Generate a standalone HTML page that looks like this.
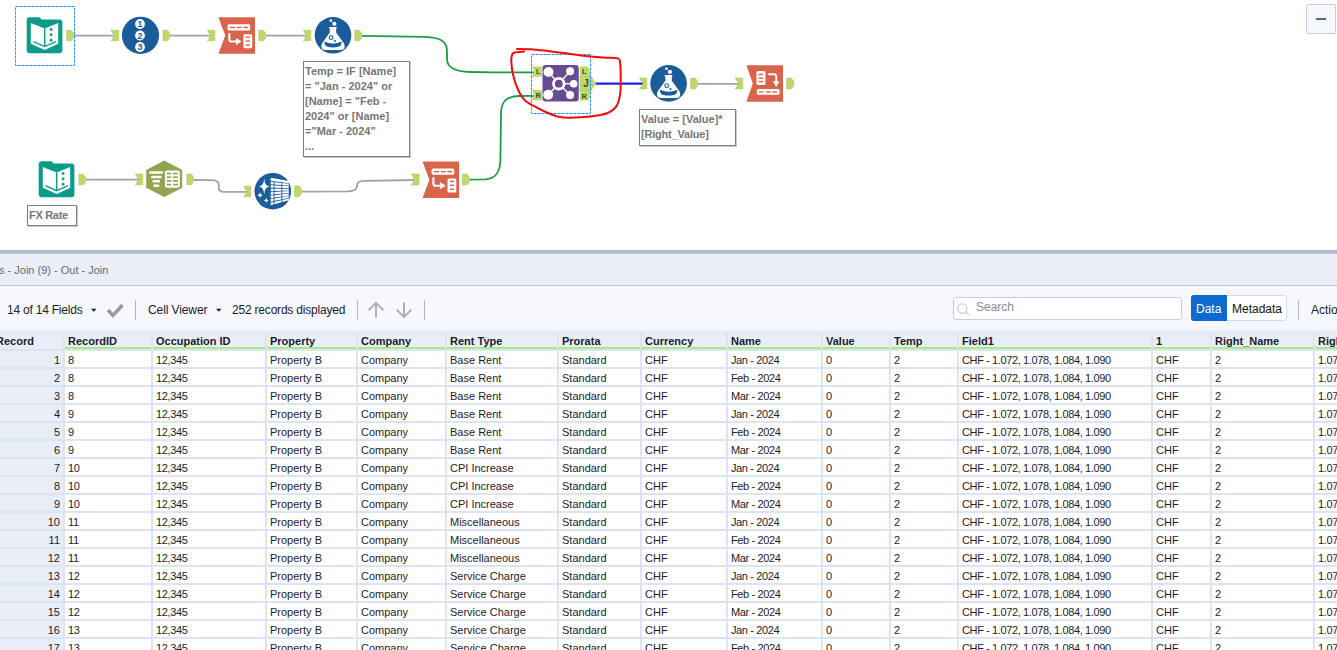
<!DOCTYPE html>
<html><head><meta charset="utf-8">
<style>
html,body{margin:0;padding:0;}
body{width:1337px;height:650px;position:relative;overflow:hidden;background:#fff;font-family:"Liberation Sans",sans-serif;}
.abs{position:absolute;}
.cm{position:absolute;background:#fff;border:1px solid #808080;box-shadow:1px 1px 0 #c8c8c8;color:#767676;font-weight:700;font-size:11px;}
.cm span{position:absolute;white-space:pre;left:1px;}
.hc{position:absolute;background:#e9edf7;overflow:hidden;}
.ht{position:absolute;left:3px;top:2px;font-size:11px;font-weight:700;color:#1c1c2a;white-space:pre;line-height:13px;}
.gl{position:absolute;top:347px;height:2px;background:#9ef07f;}
.rc{position:absolute;left:0;width:63px;height:16px;background:#e9edf7;}
.rn{position:absolute;right:3px;top:3px;font-size:11px;color:#1c1c2a;line-height:13px;}
.c{position:absolute;height:16px;background:#fff;overflow:hidden;}
.dt{position:absolute;left:3px;top:3px;font-size:11px;color:#1c1c2a;white-space:pre;line-height:13px;}
.n{letter-spacing:-0.38px;}
.tb{position:absolute;font-size:12px;color:#1c1c2a;white-space:pre;line-height:14px;}
</style></head><body>
<svg width="1337" height="250" viewBox="0 0 1337 250" style="position:absolute;left:0;top:0">
<g fill="none" stroke-width="1.8">
<path d="M74,35.6 L114.5,35.6" stroke="#a2a2a2"/>
<path d="M170,35.6 L210.8,35.6" stroke="#a2a2a2"/>
<path d="M266,35.6 L306.7,35.6" stroke="#a2a2a2"/>
<path d="M361.5,35.8 L425,36.8 C440,37.5 446.5,41 446.9,50 L447.1,60 C447.5,68 455,71.5 470,72 L494,72.3 L534,72.3" stroke="#1f9a48"/>
<path d="M595.4,83.6 L643,83.6" stroke="#2222e6" stroke-width="2.2"/>
<path d="M698,83.8 L738.7,83.8" stroke="#a2a2a2"/>
<path d="M86,179.6 L138.9,179.6" stroke="#a2a2a2"/>
<path d="M194,180 L212,180.2 C217,180.4 218.8,182 218.8,185 L218.8,188 C218.8,190.5 220.5,191.8 224,191.9 L247.1,191.9" stroke="#a2a2a2"/>
<path d="M302,191.6 L348,191.4 C353,191.2 356.5,190 356.8,187 L357.2,184.5 C357.6,182 359.5,181 364,180.8 L414.8,180" stroke="#a2a2a2"/>
<path d="M470,179.6 L485,179.4 C496,179 500,172 500.4,160 L501,112 C501.5,101 507,96.5 518,96 L534,95.9" stroke="#1f9a48"/>
</g>
<path d="M26.7,20.2 Q26.7,17.2 29.7,17.2 L38.7,17.2 Q40.7,17.2 41.2,19.5 L59.400000000000006,19.5 Q62.400000000000006,19.5 62.400000000000006,22.5 L62.400000000000006,50.2 Q62.400000000000006,53.2 59.400000000000006,53.2 L29.7,53.2 Q26.7,53.2 26.7,50.2 Z" fill="#0b9b8b"/><path d="M30.80,23.00 L44.70,28.50 L58.20,23.00 L58.20,43.70 L44.70,49.90 L30.80,43.70 Z" fill="#fff"/><path d="M44.70,28.50 L44.70,46.60 M33.40,41.60 L44.70,46.60 L56.00,41.60" stroke="#0b9b8b" stroke-width="1.4" fill="none"/><circle cx="51.10" cy="29.50" r="1.45" fill="#0b9b8b"/><circle cx="51.10" cy="34.80" r="1.45" fill="#0b9b8b"/><circle cx="51.10" cy="40.20" r="1.45" fill="#0b9b8b"/>
<path d="M66.7,30.2 L71.2,30.2 Q74.0,32.85 74.0,35.5 Q74.0,38.15 71.2,40.8 L66.7,40.8 Z" fill="#bcd96a" stroke="#a9ca5c" stroke-width="0.6"/>
<path d="M111,30.2 L118.8,30.2 L118.8,40.8 L111,40.8 L114.5,35.5 Z" fill="#bcd96a" stroke="#a9ca5c" stroke-width="0.6"/>
<circle cx="140.5" cy="35.3" r="18.6" fill="#1b5c9b"/><circle cx="140.0" cy="23.999999999999996" r="4.9" fill="#fff"/><text x="140.0" y="27.099999999999998" font-family="Liberation Sans" font-size="9" font-weight="700" fill="#1b5c9b" text-anchor="middle">1</text><circle cx="140.0" cy="35.5" r="4.9" fill="#fff"/><text x="140.0" y="38.6" font-family="Liberation Sans" font-size="9" font-weight="700" fill="#1b5c9b" text-anchor="middle">2</text><circle cx="140.0" cy="47.0" r="4.9" fill="#fff"/><text x="140.0" y="50.1" font-family="Liberation Sans" font-size="9" font-weight="700" fill="#1b5c9b" text-anchor="middle">3</text>
<path d="M163,30.2 L167.5,30.2 Q170.3,32.85 170.3,35.5 Q170.3,38.15 167.5,40.8 L163,40.8 Z" fill="#bcd96a" stroke="#a9ca5c" stroke-width="0.6"/>
<path d="M207.3,30.2 L214.8,30.2 L214.8,40.8 L207.3,40.8 L210.8,35.5 Z" fill="#bcd96a" stroke="#a9ca5c" stroke-width="0.6"/>
<path d="M218.40,17.30 L255.00,17.30 L255.00,53.80 L218.40,53.80 L225.30,35.50 Z" fill="#d8644c"/><rect x="227.50" y="24.30" width="22.7" height="6.3" rx="1.5" fill="#fff"/><line x1="229.90" y1="27.45" x2="234.90" y2="27.45" stroke="#d8644c" stroke-width="1.4"/><line x1="236.70" y1="27.45" x2="241.60" y2="27.45" stroke="#d8644c" stroke-width="1.4"/><line x1="243.20" y1="27.45" x2="248.00" y2="27.45" stroke="#d8644c" stroke-width="1.4"/><rect x="243.40" y="34.30" width="8.8" height="13.9" rx="1.5" fill="#fff"/><line x1="245.60" y1="37.20" x2="250.00" y2="37.20" stroke="#d8644c" stroke-width="1.4"/><line x1="245.60" y1="41.10" x2="250.00" y2="41.10" stroke="#d8644c" stroke-width="1.4"/><line x1="245.60" y1="45.00" x2="250.00" y2="45.00" stroke="#d8644c" stroke-width="1.4"/><path d="M229.30,33.00 L229.30,39.20 Q229.30,41.50 231.60,41.50 L237.00,41.50" stroke="#fff" stroke-width="2.1" fill="none"/><path d="M236.00,37.90 L241.60,41.50 L236.00,45.10 Z" fill="#fff"/>
<path d="M258.8,30.2 L263.3,30.2 Q266.1,32.85 266.1,35.5 Q266.1,38.15 263.3,40.8 L258.8,40.8 Z" fill="#bcd96a" stroke="#a9ca5c" stroke-width="0.6"/>
<path d="M303.2,30.2 L310.9,30.2 L310.9,40.8 L303.2,40.8 L306.7,35.5 Z" fill="#bcd96a" stroke="#a9ca5c" stroke-width="0.6"/>
<circle cx="333" cy="35.3" r="18.3" fill="#1b5c9b"/><path d="M328.60,27.00 L337.00,27.00 L336.20,28.80 L336.20,32.60 L344.00,43.50 Q346.50,49.80 340.50,50.00 L325.50,50.00 Q319.50,49.80 322.00,43.50 L329.80,32.60 L329.80,28.80 Z" fill="#fff"/><path d="M324.50,41.60 Q333.00,45.80 341.60,41.60 Q342.00,45.20 339.00,46.60 Q333.00,48.40 327.00,46.60 Q324.00,45.20 324.50,41.60 Z" fill="#1b5c9b"/><circle cx="331.10" cy="37.60" r="1.9" fill="none" stroke="#1b5c9b" stroke-width="1.1"/><circle cx="334.90" cy="41.00" r="1" fill="#1b5c9b"/><circle cx="330.90" cy="20.60" r="1.35" fill="#fff"/><circle cx="334.30" cy="23.80" r="2.1" fill="#fff"/>
<path d="M354.8,30.2 L359.3,30.2 Q362.1,32.85 362.1,35.5 Q362.1,38.15 359.3,40.8 L354.8,40.8 Z" fill="#bcd96a" stroke="#a9ca5c" stroke-width="0.6"/>
<rect x="542.5" y="65.1" width="36.3" height="36.3" rx="3.2" fill="#694b91"/><line x1="558.8" y1="83.7" x2="548.5" y2="72" stroke="#fff" stroke-width="1.4"/><circle cx="548.5" cy="72" r="5" fill="#fff"/><line x1="558.8" y1="83.7" x2="570.1" y2="71.3" stroke="#fff" stroke-width="1.4"/><circle cx="570.1" cy="71.3" r="4" fill="#fff"/><line x1="558.8" y1="83.7" x2="573.7" y2="83.7" stroke="#fff" stroke-width="1.4"/><circle cx="573.7" cy="83.7" r="3.8" fill="#fff"/><line x1="558.8" y1="83.7" x2="548.2" y2="94.7" stroke="#fff" stroke-width="1.4"/><circle cx="548.2" cy="94.7" r="5" fill="#fff"/><line x1="558.8" y1="83.7" x2="570.1" y2="95" stroke="#fff" stroke-width="1.4"/><circle cx="570.1" cy="95" r="4" fill="#fff"/><circle cx="558.8" cy="83.7" r="5.3" fill="#694b91" stroke="#fff" stroke-width="2.8"/><path d="M531.9,66.5 L541.8,66.5 L541.8,76.7 L531.9,76.7 L534.6,71.6 Z" fill="#bcd96a"/><text x="538.2" y="74.3" font-family="Liberation Sans" font-size="7.5" font-weight="700" fill="#35503a" text-anchor="middle">L</text><path d="M531.9,90.1 L541.8,90.1 L541.8,100.3 L531.9,100.3 L534.6,95.19999999999999 Z" fill="#bcd96a"/><text x="538.2" y="97.89999999999999" font-family="Liberation Sans" font-size="7.5" font-weight="700" fill="#35503a" text-anchor="middle">R</text><path d="M580,66.5 L588,66.5 L589.8,70 L589.8,75.3 L580,75.3 Z" fill="#bcd96a"/><text x="584.2" y="73.6" font-family="Liberation Sans" font-size="7.5" font-weight="700" fill="#35503a" text-anchor="middle">L</text><path d="M580,91.5 L589.8,91.5 L589.8,97.5 L588,100.4 L580,100.4 Z" fill="#bcd96a"/><text x="584.2" y="98.6" font-family="Liberation Sans" font-size="7.5" font-weight="700" fill="#35503a" text-anchor="middle">R</text><path d="M580,75.6 L590.5,75.6 L595.4,83.4 L590.5,91.2 L580,91.2 Z" fill="#bcd96a" stroke="#a9c65a" stroke-width="0.6"/><text x="586" y="87" font-family="Liberation Sans" font-size="10" font-weight="700" fill="#35503a" text-anchor="middle">J</text>
<path d="M639.5,78.1 L646.8,78.1 L646.8,88.89999999999999 L639.5,88.89999999999999 L643.0,83.5 Z" fill="#bcd96a" stroke="#a9ca5c" stroke-width="0.6"/>
<circle cx="668.6" cy="83.4" r="18.3" fill="#1b5c9b"/><path d="M664.20,75.10 L672.60,75.10 L671.80,76.90 L671.80,80.70 L679.60,91.60 Q682.10,97.90 676.10,98.10 L661.10,98.10 Q655.10,97.90 657.60,91.60 L665.40,80.70 L665.40,76.90 Z" fill="#fff"/><path d="M660.10,89.70 Q668.60,93.90 677.20,89.70 Q677.60,93.30 674.60,94.70 Q668.60,96.50 662.60,94.70 Q659.60,93.30 660.10,89.70 Z" fill="#1b5c9b"/><circle cx="666.70" cy="85.70" r="1.9" fill="none" stroke="#1b5c9b" stroke-width="1.1"/><circle cx="670.50" cy="89.10" r="1" fill="#1b5c9b"/><circle cx="666.50" cy="68.70" r="1.35" fill="#fff"/><circle cx="669.90" cy="71.90" r="2.1" fill="#fff"/>
<path d="M690.7,78.1 L695.2,78.1 Q698.0,80.8 698.0,83.5 Q698.0,86.19999999999999 695.2,88.89999999999999 L690.7,88.89999999999999 Z" fill="#bcd96a" stroke="#a9ca5c" stroke-width="0.6"/>
<path d="M735.2,78.1 L742.8000000000001,78.1 L742.8000000000001,88.89999999999999 L735.2,88.89999999999999 L738.7,83.5 Z" fill="#bcd96a" stroke="#a9ca5c" stroke-width="0.6"/>
<path d="M746.40,65.30 L783.00,65.30 L783.00,101.80 L746.40,101.80 L752.80,83.50 Z" fill="#d8644c"/><rect x="756.50" y="71.00" width="8.9" height="14.1" rx="1.5" fill="#fff"/><line x1="758.40" y1="74.50" x2="763.30" y2="74.50" stroke="#d8644c" stroke-width="1.4"/><line x1="758.40" y1="78.10" x2="763.30" y2="78.10" stroke="#d8644c" stroke-width="1.4"/><line x1="758.40" y1="81.60" x2="763.30" y2="81.60" stroke="#d8644c" stroke-width="1.4"/><rect x="756.90" y="89.00" width="22.6" height="5.8" rx="1.5" fill="#fff"/><line x1="759.00" y1="91.90" x2="763.60" y2="91.90" stroke="#d8644c" stroke-width="1.4"/><line x1="766.10" y1="91.90" x2="770.70" y2="91.90" stroke="#d8644c" stroke-width="1.4"/><line x1="772.40" y1="91.90" x2="777.00" y2="91.90" stroke="#d8644c" stroke-width="1.4"/><path d="M768.20,74.20 L774.00,74.20 Q776.20,74.20 776.20,76.60 L776.20,82.00" stroke="#fff" stroke-width="1.9" fill="none"/><path d="M772.90,81.20 L779.50,81.20 L776.20,87.00 Z" fill="#fff"/>
<path d="M786.7,78.1 L791.2,78.1 Q794.0,80.8 794.0,83.5 Q794.0,86.19999999999999 791.2,88.89999999999999 L786.7,88.89999999999999 Z" fill="#bcd96a" stroke="#a9ca5c" stroke-width="0.6"/>
<path d="M38.7,164.3 Q38.7,161.3 41.7,161.3 L50.7,161.3 Q52.7,161.3 53.2,163.60000000000002 L71.4,163.60000000000002 Q74.4,163.60000000000002 74.4,166.60000000000002 L74.4,194.3 Q74.4,197.3 71.4,197.3 L41.7,197.3 Q38.7,197.3 38.7,194.3 Z" fill="#0b9b8b"/><path d="M42.80,167.10 L56.70,172.60 L70.20,167.10 L70.20,187.80 L56.70,194.00 L42.80,187.80 Z" fill="#fff"/><path d="M56.70,172.60 L56.70,190.70 M45.40,185.70 L56.70,190.70 L68.00,185.70" stroke="#0b9b8b" stroke-width="1.4" fill="none"/><circle cx="63.10" cy="173.60" r="1.45" fill="#0b9b8b"/><circle cx="63.10" cy="178.90" r="1.45" fill="#0b9b8b"/><circle cx="63.10" cy="184.30" r="1.45" fill="#0b9b8b"/>
<path d="M78.9,174.3 L83.4,174.3 Q85.9,176.925 85.9,179.55 Q85.9,182.175 83.4,184.8 L78.9,184.8 Z" fill="#bcd96a" stroke="#a9ca5c" stroke-width="0.6"/>
<path d="M135.4,174.1 L142.70000000000002,174.1 L142.70000000000002,184.7 L135.4,184.7 L138.9,179.4 Z" fill="#bcd96a" stroke="#a9ca5c" stroke-width="0.6"/>
<path d="M164.3,160.6 L182.2,170 L182.2,187.7 L164.3,197.1 L146.2,187.7 L146.2,170 Z" fill="#91a451"/><rect x="149.1" y="171.2" width="14.20" height="2.6" rx="1" fill="#fff"/><rect x="151" y="175.7" width="10.70" height="2.6" rx="1" fill="#fff"/><rect x="152.3" y="180.0" width="7.80" height="2.6" rx="1" fill="#fff"/><rect x="153.3" y="184.5" width="6.10" height="2.6" rx="1" fill="#fff"/><rect x="164.9" y="170.6" width="14.9" height="17.1" rx="2.2" fill="#fff"/><line x1="166.9" y1="173.5" x2="171.4" y2="173.5" stroke="#91a451" stroke-width="1.7"/><line x1="173" y1="173.5" x2="177.9" y2="173.5" stroke="#91a451" stroke-width="1.7"/><line x1="166.9" y1="177.2" x2="171.4" y2="177.2" stroke="#91a451" stroke-width="1.7"/><line x1="173" y1="177.2" x2="177.9" y2="177.2" stroke="#91a451" stroke-width="1.7"/><line x1="166.9" y1="180.9" x2="171.4" y2="180.9" stroke="#91a451" stroke-width="1.7"/><line x1="173" y1="180.9" x2="177.9" y2="180.9" stroke="#91a451" stroke-width="1.7"/><line x1="166.9" y1="184.6" x2="171.4" y2="184.6" stroke="#91a451" stroke-width="1.7"/><line x1="173" y1="184.6" x2="177.9" y2="184.6" stroke="#91a451" stroke-width="1.7"/>
<path d="M186.9,174.1 L191.4,174.1 Q193.70000000000002,176.75 193.70000000000002,179.4 Q193.70000000000002,182.04999999999998 191.4,184.7 L186.9,184.7 Z" fill="#bcd96a" stroke="#a9ca5c" stroke-width="0.6"/>
<path d="M243.6,186.2 L250.9,186.2 L250.9,196.79999999999998 L243.6,196.79999999999998 L247.1,191.5 Z" fill="#bcd96a" stroke="#a9ca5c" stroke-width="0.6"/>
<circle cx="272.8" cy="191.2" r="18.3" fill="#1b5c9b"/><path d="M264.2,178.3 Q264.55,186.15 269.5,186.5 Q264.55,186.85 264.2,194.7 Q263.84999999999997,186.85 258.9,186.5 Q263.84999999999997,186.15 264.2,178.3 Z" fill="#fff"/><path d="M260.1,192.29999999999998 Q260.35,194.95 262.70000000000005,195.2 Q260.35,195.45 260.1,198.1 Q259.85,195.45 257.5,195.2 Q259.85,194.95 260.1,192.29999999999998 Z" fill="#fff"/><path d="M266.2,197.8 Q266.42,200.18 268.5,200.4 Q266.42,200.62 266.2,203.0 Q265.97999999999996,200.62 263.9,200.4 Q265.97999999999996,200.18 266.2,197.8 Z" fill="#fff"/><g><path d="M270.7,177.80 L288.8,181.00 L288.8,183.14 L270.7,180.83 Z" fill="#fff"/><path d="M270.7,181.72 L273.6,182.05 L273.6,184.51 L270.7,184.31 Z" fill="#fff"/><path d="M274.5,182.15 L281.4,182.93 L281.4,185.06 L274.5,184.57 Z" fill="#fff"/><path d="M282.3,183.03 L288.8,183.76 L288.8,185.59 L282.3,185.13 Z" fill="#fff"/><path d="M270.7,185.19 L273.6,185.36 L273.6,187.82 L270.7,187.78 Z" fill="#fff"/><path d="M274.5,185.41 L281.4,185.80 L281.4,187.93 L274.5,187.83 Z" fill="#fff"/><path d="M282.3,185.85 L288.8,186.21 L288.8,188.04 L282.3,187.94 Z" fill="#fff"/><path d="M270.7,188.67 L273.6,188.67 L273.6,191.13 L270.7,191.26 Z" fill="#fff"/><path d="M274.5,188.67 L281.4,188.67 L281.4,190.80 L274.5,191.09 Z" fill="#fff"/><path d="M282.3,188.67 L288.8,188.66 L288.8,190.49 L282.3,190.76 Z" fill="#fff"/><path d="M270.7,192.14 L273.6,191.98 L273.6,194.44 L270.7,194.73 Z" fill="#fff"/><path d="M274.5,191.93 L281.4,191.54 L281.4,193.67 L274.5,194.35 Z" fill="#fff"/><path d="M282.3,191.48 L288.8,191.11 L288.8,192.94 L282.3,193.58 Z" fill="#fff"/><path d="M270.7,195.62 L273.6,195.29 L273.6,197.75 L270.7,198.21 Z" fill="#fff"/><path d="M274.5,195.19 L281.4,194.40 L281.4,196.54 L274.5,197.61 Z" fill="#fff"/><path d="M282.3,194.30 L288.8,193.56 L288.8,195.39 L282.3,196.40 Z" fill="#fff"/><path d="M270.7,199.09 L273.6,198.60 L273.6,201.06 L270.7,201.68 Z" fill="#fff"/><path d="M274.5,198.45 L281.4,197.27 L281.4,199.41 L274.5,200.87 Z" fill="#fff"/><path d="M282.3,197.12 L288.8,196.01 L288.8,197.84 L282.3,199.22 Z" fill="#fff"/><path d="M270.7,202.57 L273.6,201.91 L273.6,204.38 L270.7,205.16 Z" fill="#fff"/><path d="M274.5,201.71 L281.4,200.14 L281.4,202.28 L274.5,204.13 Z" fill="#fff"/><path d="M282.3,199.94 L288.8,198.46 L288.8,200.29 L282.3,202.03 Z" fill="#fff"/></g>
<path d="M294.7,186.1 L299.2,186.1 Q301.8,188.75 301.8,191.4 Q301.8,194.04999999999998 299.2,196.7 L294.7,196.7 Z" fill="#bcd96a" stroke="#a9ca5c" stroke-width="0.6"/>
<path d="M411.3,174.1 L419.0,174.1 L419.0,184.9 L411.3,184.9 L414.8,179.5 Z" fill="#bcd96a" stroke="#a9ca5c" stroke-width="0.6"/>
<path d="M422.50,161.50 L459.10,161.50 L459.10,198.00 L422.50,198.00 L429.40,179.70 Z" fill="#d8644c"/><rect x="431.60" y="168.50" width="22.7" height="6.3" rx="1.5" fill="#fff"/><line x1="434.00" y1="171.65" x2="439.00" y2="171.65" stroke="#d8644c" stroke-width="1.4"/><line x1="440.80" y1="171.65" x2="445.70" y2="171.65" stroke="#d8644c" stroke-width="1.4"/><line x1="447.30" y1="171.65" x2="452.10" y2="171.65" stroke="#d8644c" stroke-width="1.4"/><rect x="447.50" y="178.50" width="8.8" height="13.9" rx="1.5" fill="#fff"/><line x1="449.70" y1="181.40" x2="454.10" y2="181.40" stroke="#d8644c" stroke-width="1.4"/><line x1="449.70" y1="185.30" x2="454.10" y2="185.30" stroke="#d8644c" stroke-width="1.4"/><line x1="449.70" y1="189.20" x2="454.10" y2="189.20" stroke="#d8644c" stroke-width="1.4"/><path d="M433.40,177.20 L433.40,183.40 Q433.40,185.70 435.70,185.70 L441.10,185.70" stroke="#fff" stroke-width="2.1" fill="none"/><path d="M440.10,182.10 L445.70,185.70 L440.10,189.30 Z" fill="#fff"/>
<path d="M462.5,174.1 L467.0,174.1 Q469.8,176.79999999999998 469.8,179.5 Q469.8,182.2 467.0,184.9 L462.5,184.9 Z" fill="#bcd96a" stroke="#a9ca5c" stroke-width="0.6"/>
<rect x="15.5" y="6.5" width="59" height="59" fill="none" stroke="#2a8cfa" stroke-width="1" stroke-dasharray="3,1"/>
<rect x="531.5" y="54.5" width="59" height="59" fill="none" stroke="#2a8cfa" stroke-width="1" stroke-dasharray="3,1"/>
<path d="M524,51.5 C522.58,51.65 517.47,51.92 515.5,52.4 C513.53,52.88 512.90,52.77 512.2,54.4 C511.50,56.03 511.08,58.50 511.3,62.2 C511.52,65.90 512.37,72.02 513.5,76.6 C514.63,81.18 516.25,85.78 518.1,89.7 C519.95,93.62 521.77,97.27 524.6,100.1 C527.43,102.93 531.40,104.63 535.1,106.7 C538.80,108.77 542.67,110.77 546.8,112.5 C550.93,114.23 555.97,116.22 559.9,117.1 C563.83,117.98 565.38,117.90 570.4,117.8 C575.42,117.70 583.90,117.27 590,116.5 C596.10,115.73 602.65,114.83 607,113.2 C611.35,111.57 613.93,109.75 616.1,106.7 C618.27,103.65 619.23,99.48 620,94.9 C620.77,90.32 620.70,84.65 620.7,79.2 C620.70,73.75 620.55,65.68 620,62.2 C619.45,58.72 620.23,59.07 617.4,58.3 C614.57,57.53 608.67,58.03 603,57.6 C597.33,57.17 589.93,56.45 583.4,55.7 C576.87,54.95 569.68,53.87 563.8,53.1 C557.92,52.33 553.55,51.75 548.1,51.1 C542.65,50.45 536.28,49.57 531.1,49.2 C525.92,48.83 519.35,48.95 517,48.9" fill="none" stroke="#f20d0d" stroke-width="2" stroke-linecap="round" stroke-linejoin="round"/>
</svg>
<div class="cm" style="left:303px;top:61px;width:105px;height:94px">
<span style="top:3px">Temp = IF [Name]</span>
<span style="top:18px">= "Jan - 2024" or</span>
<span style="top:33px">[Name] = "Feb -</span>
<span style="top:48px">2024" or [Name]</span>
<span style="top:63px">="Mar - 2024"</span>
<span style="top:78px">...</span>
</div>
<div class="cm" style="left:639px;top:109px;width:95px;height:35px">
<span style="top:3px">Value = [Value]*</span>
<span style="top:18px;letter-spacing:-0.2px">[Right_Value]</span>
</div>
<div class="cm" style="left:27px;top:205px;width:48px;height:19px">
<span style="top:3px;left:1px;letter-spacing:-0.3px">FX Rate</span>
</div>
<div class="abs" style="left:1306px;top:4px;width:28px;height:28px;border:1px solid #c6cee4;border-radius:2px;background:#f6f8fe"></div>
<div class="abs" style="left:1316px;top:18px;width:10px;height:2px;background:#5b668a"></div>
<!-- results panel -->
<div class="abs" style="left:0;top:250px;width:1337px;height:3px;background:#aabbdc"></div>
<div class="abs" style="left:0;top:253px;width:1337px;height:1px;background:#c6c7ca"></div>
<div class="abs" style="left:0;top:254px;width:1337px;height:1px;background:#dfe1e6"></div>
<div class="abs" style="left:0;top:254px;width:1337px;height:31px;background:#eaeef8"></div>
<div class="abs" style="left:0;top:285px;width:1337px;height:1px;background:#c8c9cc"></div>
<div class="tb" style="left:-1px;top:263px;font-size:11px;color:#6a6a6a">s - Join (9) - Out - Join</div>
<div class="abs" style="left:0;top:286px;width:1337px;height:44px;background:#f6f8fd"></div>
<div class="abs" style="left:0;top:330px;width:1337px;height:1px;background:#efefee"></div>
<div class="abs" style="left:0;top:331px;width:1337px;height:319px;background:#dde3f0"></div>
<div class="abs" style="left:0;top:331px;width:1337px;height:1px;background:#eef1f8"></div>
<div class="tb" style="left:7px;top:303px;letter-spacing:-0.22px">14 of 14 Fields</div>
<svg class="abs" style="left:0;top:290px" width="440" height="40">
<path d="M91,18.7 L96.5,18.7 L93.75,21.8 Z" fill="#222"/>
<path d="M108,20 L113,25.5 L122.5,15" stroke="#9a9a9a" stroke-width="3.4" fill="none"/>
<rect x="135" y="10" width="1" height="20" fill="#b8b8b8"/>
<path d="M216,18.7 L221.5,18.7 L218.75,21.8 Z" fill="#222"/>
<rect x="357" y="10" width="1" height="20" fill="#b8b8b8"/>
<path d="M376,27.5 L376,13 M368.6,20.2 L376,12.9 L383.4,20.2" stroke="#b0b0b0" stroke-width="2" fill="none"/>
<path d="M404,12.5 L404,27 M396.6,19.6 L404,27 L411.4,19.6" stroke="#b0b0b0" stroke-width="2" fill="none"/>
<rect x="424" y="10" width="1" height="20" fill="#b8b8b8"/>
</svg>
<div class="tb" style="left:148px;top:303px;letter-spacing:-0.1px">Cell Viewer</div>
<div class="tb" style="left:232px;top:303px;letter-spacing:-0.2px">252 records displayed</div>
<div class="abs" style="left:953px;top:297px;width:227px;height:21px;border:1px solid #c5cde2;border-radius:3px;background:#fff"></div>
<svg class="abs" style="left:950px;top:297px" width="30" height="24">
<circle cx="12.3" cy="11.5" r="4.6" fill="none" stroke="#c6cee2" stroke-width="1.3"/>
<path d="M15.6,14.8 L19,18.2" stroke="#c6cee2" stroke-width="1.5"/>
</svg>
<div class="tb" style="left:976px;top:300px;font-size:12px;color:#8c8c94">Search</div>
<div class="abs" style="left:1191px;top:295px;width:96px;height:26px;border:1px solid #d3d9ea;border-radius:3px;background:#fff;box-sizing:border-box"></div>
<div class="abs" style="left:1191px;top:295px;width:36px;height:26px;border-radius:3px 0 0 3px;background:#0f6ad0"></div>
<div class="tb" style="left:1196px;top:302px;color:#fff">Data</div>
<div class="tb" style="left:1232px;top:302px;color:#111">Metadata</div>
<div class="abs" style="left:1298px;top:300px;width:1px;height:20px;background:#b8b8b8"></div>
<div class="tb" style="left:1311px;top:303px">Actions</div>
<div class="hc" style="left:0px;top:333px;width:63px;height:16px"><span class="ht" style="left:-4px">Record</span></div>
<div class="hc" style="left:65px;top:333px;width:86px;height:14px"><span class="ht">RecordID</span></div>
<div class="gl" style="left:65px;width:86px"></div>
<div class="hc" style="left:153px;top:333px;width:112px;height:14px"><span class="ht">Occupation ID</span></div>
<div class="gl" style="left:153px;width:112px"></div>
<div class="hc" style="left:267px;top:333px;width:89px;height:14px"><span class="ht">Property</span></div>
<div class="gl" style="left:267px;width:89px"></div>
<div class="hc" style="left:358px;top:333px;width:87px;height:14px"><span class="ht">Company</span></div>
<div class="gl" style="left:358px;width:87px"></div>
<div class="hc" style="left:447px;top:333px;width:110px;height:14px"><span class="ht">Rent Type</span></div>
<div class="gl" style="left:447px;width:110px"></div>
<div class="hc" style="left:559px;top:333px;width:81px;height:14px"><span class="ht">Prorata</span></div>
<div class="gl" style="left:559px;width:81px"></div>
<div class="hc" style="left:642px;top:333px;width:84px;height:14px"><span class="ht">Currency</span></div>
<div class="gl" style="left:642px;width:84px"></div>
<div class="hc" style="left:728px;top:333px;width:93px;height:14px"><span class="ht">Name</span></div>
<div class="gl" style="left:728px;width:93px"></div>
<div class="hc" style="left:823px;top:333px;width:66px;height:14px"><span class="ht">Value</span></div>
<div class="gl" style="left:823px;width:66px"></div>
<div class="hc" style="left:891px;top:333px;width:66px;height:14px"><span class="ht">Temp</span></div>
<div class="gl" style="left:891px;width:66px"></div>
<div class="hc" style="left:959px;top:333px;width:192px;height:14px"><span class="ht">Field1</span></div>
<div class="gl" style="left:959px;width:192px"></div>
<div class="hc" style="left:1153px;top:333px;width:57px;height:14px"><span class="ht">1</span></div>
<div class="gl" style="left:1153px;width:57px"></div>
<div class="hc" style="left:1212px;top:333px;width:101px;height:14px"><span class="ht">Right_Name</span></div>
<div class="gl" style="left:1212px;width:101px"></div>
<div class="hc" style="left:1315px;top:333px;width:86px;height:14px"><span class="ht">Right_Value</span></div>
<div class="gl" style="left:1315px;width:86px"></div>
<div class="rc" style="top:351px"><span class="rn">1</span></div>
<div class="c" style="left:65px;top:351px;width:86px"><span class="dt n">8</span></div>
<div class="c" style="left:153px;top:351px;width:112px"><span class="dt n">12,345</span></div>
<div class="c" style="left:267px;top:351px;width:89px"><span class="dt">Property B</span></div>
<div class="c" style="left:358px;top:351px;width:87px"><span class="dt">Company</span></div>
<div class="c" style="left:447px;top:351px;width:110px"><span class="dt">Base Rent</span></div>
<div class="c" style="left:559px;top:351px;width:81px"><span class="dt">Standard</span></div>
<div class="c" style="left:642px;top:351px;width:84px"><span class="dt">CHF</span></div>
<div class="c" style="left:728px;top:351px;width:93px"><span class="dt n">Jan - 2024</span></div>
<div class="c" style="left:823px;top:351px;width:66px"><span class="dt n">0</span></div>
<div class="c" style="left:891px;top:351px;width:66px"><span class="dt n">2</span></div>
<div class="c" style="left:959px;top:351px;width:192px"><span class="dt n">CHF - 1.072, 1.078, 1.084, 1.090</span></div>
<div class="c" style="left:1153px;top:351px;width:57px"><span class="dt">CHF</span></div>
<div class="c" style="left:1212px;top:351px;width:101px"><span class="dt n">2</span></div>
<div class="c" style="left:1315px;top:351px;width:86px"><span class="dt n">1.072</span></div>
<div class="rc" style="top:369px"><span class="rn">2</span></div>
<div class="c" style="left:65px;top:369px;width:86px"><span class="dt n">8</span></div>
<div class="c" style="left:153px;top:369px;width:112px"><span class="dt n">12,345</span></div>
<div class="c" style="left:267px;top:369px;width:89px"><span class="dt">Property B</span></div>
<div class="c" style="left:358px;top:369px;width:87px"><span class="dt">Company</span></div>
<div class="c" style="left:447px;top:369px;width:110px"><span class="dt">Base Rent</span></div>
<div class="c" style="left:559px;top:369px;width:81px"><span class="dt">Standard</span></div>
<div class="c" style="left:642px;top:369px;width:84px"><span class="dt">CHF</span></div>
<div class="c" style="left:728px;top:369px;width:93px"><span class="dt n">Feb - 2024</span></div>
<div class="c" style="left:823px;top:369px;width:66px"><span class="dt n">0</span></div>
<div class="c" style="left:891px;top:369px;width:66px"><span class="dt n">2</span></div>
<div class="c" style="left:959px;top:369px;width:192px"><span class="dt n">CHF - 1.072, 1.078, 1.084, 1.090</span></div>
<div class="c" style="left:1153px;top:369px;width:57px"><span class="dt">CHF</span></div>
<div class="c" style="left:1212px;top:369px;width:101px"><span class="dt n">2</span></div>
<div class="c" style="left:1315px;top:369px;width:86px"><span class="dt n">1.072</span></div>
<div class="rc" style="top:387px"><span class="rn">3</span></div>
<div class="c" style="left:65px;top:387px;width:86px"><span class="dt n">8</span></div>
<div class="c" style="left:153px;top:387px;width:112px"><span class="dt n">12,345</span></div>
<div class="c" style="left:267px;top:387px;width:89px"><span class="dt">Property B</span></div>
<div class="c" style="left:358px;top:387px;width:87px"><span class="dt">Company</span></div>
<div class="c" style="left:447px;top:387px;width:110px"><span class="dt">Base Rent</span></div>
<div class="c" style="left:559px;top:387px;width:81px"><span class="dt">Standard</span></div>
<div class="c" style="left:642px;top:387px;width:84px"><span class="dt">CHF</span></div>
<div class="c" style="left:728px;top:387px;width:93px"><span class="dt n">Mar - 2024</span></div>
<div class="c" style="left:823px;top:387px;width:66px"><span class="dt n">0</span></div>
<div class="c" style="left:891px;top:387px;width:66px"><span class="dt n">2</span></div>
<div class="c" style="left:959px;top:387px;width:192px"><span class="dt n">CHF - 1.072, 1.078, 1.084, 1.090</span></div>
<div class="c" style="left:1153px;top:387px;width:57px"><span class="dt">CHF</span></div>
<div class="c" style="left:1212px;top:387px;width:101px"><span class="dt n">2</span></div>
<div class="c" style="left:1315px;top:387px;width:86px"><span class="dt n">1.072</span></div>
<div class="rc" style="top:405px"><span class="rn">4</span></div>
<div class="c" style="left:65px;top:405px;width:86px"><span class="dt n">9</span></div>
<div class="c" style="left:153px;top:405px;width:112px"><span class="dt n">12,345</span></div>
<div class="c" style="left:267px;top:405px;width:89px"><span class="dt">Property B</span></div>
<div class="c" style="left:358px;top:405px;width:87px"><span class="dt">Company</span></div>
<div class="c" style="left:447px;top:405px;width:110px"><span class="dt">Base Rent</span></div>
<div class="c" style="left:559px;top:405px;width:81px"><span class="dt">Standard</span></div>
<div class="c" style="left:642px;top:405px;width:84px"><span class="dt">CHF</span></div>
<div class="c" style="left:728px;top:405px;width:93px"><span class="dt n">Jan - 2024</span></div>
<div class="c" style="left:823px;top:405px;width:66px"><span class="dt n">0</span></div>
<div class="c" style="left:891px;top:405px;width:66px"><span class="dt n">2</span></div>
<div class="c" style="left:959px;top:405px;width:192px"><span class="dt n">CHF - 1.072, 1.078, 1.084, 1.090</span></div>
<div class="c" style="left:1153px;top:405px;width:57px"><span class="dt">CHF</span></div>
<div class="c" style="left:1212px;top:405px;width:101px"><span class="dt n">2</span></div>
<div class="c" style="left:1315px;top:405px;width:86px"><span class="dt n">1.072</span></div>
<div class="rc" style="top:423px"><span class="rn">5</span></div>
<div class="c" style="left:65px;top:423px;width:86px"><span class="dt n">9</span></div>
<div class="c" style="left:153px;top:423px;width:112px"><span class="dt n">12,345</span></div>
<div class="c" style="left:267px;top:423px;width:89px"><span class="dt">Property B</span></div>
<div class="c" style="left:358px;top:423px;width:87px"><span class="dt">Company</span></div>
<div class="c" style="left:447px;top:423px;width:110px"><span class="dt">Base Rent</span></div>
<div class="c" style="left:559px;top:423px;width:81px"><span class="dt">Standard</span></div>
<div class="c" style="left:642px;top:423px;width:84px"><span class="dt">CHF</span></div>
<div class="c" style="left:728px;top:423px;width:93px"><span class="dt n">Feb - 2024</span></div>
<div class="c" style="left:823px;top:423px;width:66px"><span class="dt n">0</span></div>
<div class="c" style="left:891px;top:423px;width:66px"><span class="dt n">2</span></div>
<div class="c" style="left:959px;top:423px;width:192px"><span class="dt n">CHF - 1.072, 1.078, 1.084, 1.090</span></div>
<div class="c" style="left:1153px;top:423px;width:57px"><span class="dt">CHF</span></div>
<div class="c" style="left:1212px;top:423px;width:101px"><span class="dt n">2</span></div>
<div class="c" style="left:1315px;top:423px;width:86px"><span class="dt n">1.072</span></div>
<div class="rc" style="top:441px"><span class="rn">6</span></div>
<div class="c" style="left:65px;top:441px;width:86px"><span class="dt n">9</span></div>
<div class="c" style="left:153px;top:441px;width:112px"><span class="dt n">12,345</span></div>
<div class="c" style="left:267px;top:441px;width:89px"><span class="dt">Property B</span></div>
<div class="c" style="left:358px;top:441px;width:87px"><span class="dt">Company</span></div>
<div class="c" style="left:447px;top:441px;width:110px"><span class="dt">Base Rent</span></div>
<div class="c" style="left:559px;top:441px;width:81px"><span class="dt">Standard</span></div>
<div class="c" style="left:642px;top:441px;width:84px"><span class="dt">CHF</span></div>
<div class="c" style="left:728px;top:441px;width:93px"><span class="dt n">Mar - 2024</span></div>
<div class="c" style="left:823px;top:441px;width:66px"><span class="dt n">0</span></div>
<div class="c" style="left:891px;top:441px;width:66px"><span class="dt n">2</span></div>
<div class="c" style="left:959px;top:441px;width:192px"><span class="dt n">CHF - 1.072, 1.078, 1.084, 1.090</span></div>
<div class="c" style="left:1153px;top:441px;width:57px"><span class="dt">CHF</span></div>
<div class="c" style="left:1212px;top:441px;width:101px"><span class="dt n">2</span></div>
<div class="c" style="left:1315px;top:441px;width:86px"><span class="dt n">1.072</span></div>
<div class="rc" style="top:459px"><span class="rn">7</span></div>
<div class="c" style="left:65px;top:459px;width:86px"><span class="dt n">10</span></div>
<div class="c" style="left:153px;top:459px;width:112px"><span class="dt n">12,345</span></div>
<div class="c" style="left:267px;top:459px;width:89px"><span class="dt">Property B</span></div>
<div class="c" style="left:358px;top:459px;width:87px"><span class="dt">Company</span></div>
<div class="c" style="left:447px;top:459px;width:110px"><span class="dt">CPI Increase</span></div>
<div class="c" style="left:559px;top:459px;width:81px"><span class="dt">Standard</span></div>
<div class="c" style="left:642px;top:459px;width:84px"><span class="dt">CHF</span></div>
<div class="c" style="left:728px;top:459px;width:93px"><span class="dt n">Jan - 2024</span></div>
<div class="c" style="left:823px;top:459px;width:66px"><span class="dt n">0</span></div>
<div class="c" style="left:891px;top:459px;width:66px"><span class="dt n">2</span></div>
<div class="c" style="left:959px;top:459px;width:192px"><span class="dt n">CHF - 1.072, 1.078, 1.084, 1.090</span></div>
<div class="c" style="left:1153px;top:459px;width:57px"><span class="dt">CHF</span></div>
<div class="c" style="left:1212px;top:459px;width:101px"><span class="dt n">2</span></div>
<div class="c" style="left:1315px;top:459px;width:86px"><span class="dt n">1.072</span></div>
<div class="rc" style="top:477px"><span class="rn">8</span></div>
<div class="c" style="left:65px;top:477px;width:86px"><span class="dt n">10</span></div>
<div class="c" style="left:153px;top:477px;width:112px"><span class="dt n">12,345</span></div>
<div class="c" style="left:267px;top:477px;width:89px"><span class="dt">Property B</span></div>
<div class="c" style="left:358px;top:477px;width:87px"><span class="dt">Company</span></div>
<div class="c" style="left:447px;top:477px;width:110px"><span class="dt">CPI Increase</span></div>
<div class="c" style="left:559px;top:477px;width:81px"><span class="dt">Standard</span></div>
<div class="c" style="left:642px;top:477px;width:84px"><span class="dt">CHF</span></div>
<div class="c" style="left:728px;top:477px;width:93px"><span class="dt n">Feb - 2024</span></div>
<div class="c" style="left:823px;top:477px;width:66px"><span class="dt n">0</span></div>
<div class="c" style="left:891px;top:477px;width:66px"><span class="dt n">2</span></div>
<div class="c" style="left:959px;top:477px;width:192px"><span class="dt n">CHF - 1.072, 1.078, 1.084, 1.090</span></div>
<div class="c" style="left:1153px;top:477px;width:57px"><span class="dt">CHF</span></div>
<div class="c" style="left:1212px;top:477px;width:101px"><span class="dt n">2</span></div>
<div class="c" style="left:1315px;top:477px;width:86px"><span class="dt n">1.072</span></div>
<div class="rc" style="top:495px"><span class="rn">9</span></div>
<div class="c" style="left:65px;top:495px;width:86px"><span class="dt n">10</span></div>
<div class="c" style="left:153px;top:495px;width:112px"><span class="dt n">12,345</span></div>
<div class="c" style="left:267px;top:495px;width:89px"><span class="dt">Property B</span></div>
<div class="c" style="left:358px;top:495px;width:87px"><span class="dt">Company</span></div>
<div class="c" style="left:447px;top:495px;width:110px"><span class="dt">CPI Increase</span></div>
<div class="c" style="left:559px;top:495px;width:81px"><span class="dt">Standard</span></div>
<div class="c" style="left:642px;top:495px;width:84px"><span class="dt">CHF</span></div>
<div class="c" style="left:728px;top:495px;width:93px"><span class="dt n">Mar - 2024</span></div>
<div class="c" style="left:823px;top:495px;width:66px"><span class="dt n">0</span></div>
<div class="c" style="left:891px;top:495px;width:66px"><span class="dt n">2</span></div>
<div class="c" style="left:959px;top:495px;width:192px"><span class="dt n">CHF - 1.072, 1.078, 1.084, 1.090</span></div>
<div class="c" style="left:1153px;top:495px;width:57px"><span class="dt">CHF</span></div>
<div class="c" style="left:1212px;top:495px;width:101px"><span class="dt n">2</span></div>
<div class="c" style="left:1315px;top:495px;width:86px"><span class="dt n">1.072</span></div>
<div class="rc" style="top:513px"><span class="rn">10</span></div>
<div class="c" style="left:65px;top:513px;width:86px"><span class="dt n">11</span></div>
<div class="c" style="left:153px;top:513px;width:112px"><span class="dt n">12,345</span></div>
<div class="c" style="left:267px;top:513px;width:89px"><span class="dt">Property B</span></div>
<div class="c" style="left:358px;top:513px;width:87px"><span class="dt">Company</span></div>
<div class="c" style="left:447px;top:513px;width:110px"><span class="dt">Miscellaneous</span></div>
<div class="c" style="left:559px;top:513px;width:81px"><span class="dt">Standard</span></div>
<div class="c" style="left:642px;top:513px;width:84px"><span class="dt">CHF</span></div>
<div class="c" style="left:728px;top:513px;width:93px"><span class="dt n">Jan - 2024</span></div>
<div class="c" style="left:823px;top:513px;width:66px"><span class="dt n">0</span></div>
<div class="c" style="left:891px;top:513px;width:66px"><span class="dt n">2</span></div>
<div class="c" style="left:959px;top:513px;width:192px"><span class="dt n">CHF - 1.072, 1.078, 1.084, 1.090</span></div>
<div class="c" style="left:1153px;top:513px;width:57px"><span class="dt">CHF</span></div>
<div class="c" style="left:1212px;top:513px;width:101px"><span class="dt n">2</span></div>
<div class="c" style="left:1315px;top:513px;width:86px"><span class="dt n">1.072</span></div>
<div class="rc" style="top:531px"><span class="rn">11</span></div>
<div class="c" style="left:65px;top:531px;width:86px"><span class="dt n">11</span></div>
<div class="c" style="left:153px;top:531px;width:112px"><span class="dt n">12,345</span></div>
<div class="c" style="left:267px;top:531px;width:89px"><span class="dt">Property B</span></div>
<div class="c" style="left:358px;top:531px;width:87px"><span class="dt">Company</span></div>
<div class="c" style="left:447px;top:531px;width:110px"><span class="dt">Miscellaneous</span></div>
<div class="c" style="left:559px;top:531px;width:81px"><span class="dt">Standard</span></div>
<div class="c" style="left:642px;top:531px;width:84px"><span class="dt">CHF</span></div>
<div class="c" style="left:728px;top:531px;width:93px"><span class="dt n">Feb - 2024</span></div>
<div class="c" style="left:823px;top:531px;width:66px"><span class="dt n">0</span></div>
<div class="c" style="left:891px;top:531px;width:66px"><span class="dt n">2</span></div>
<div class="c" style="left:959px;top:531px;width:192px"><span class="dt n">CHF - 1.072, 1.078, 1.084, 1.090</span></div>
<div class="c" style="left:1153px;top:531px;width:57px"><span class="dt">CHF</span></div>
<div class="c" style="left:1212px;top:531px;width:101px"><span class="dt n">2</span></div>
<div class="c" style="left:1315px;top:531px;width:86px"><span class="dt n">1.072</span></div>
<div class="rc" style="top:549px"><span class="rn">12</span></div>
<div class="c" style="left:65px;top:549px;width:86px"><span class="dt n">11</span></div>
<div class="c" style="left:153px;top:549px;width:112px"><span class="dt n">12,345</span></div>
<div class="c" style="left:267px;top:549px;width:89px"><span class="dt">Property B</span></div>
<div class="c" style="left:358px;top:549px;width:87px"><span class="dt">Company</span></div>
<div class="c" style="left:447px;top:549px;width:110px"><span class="dt">Miscellaneous</span></div>
<div class="c" style="left:559px;top:549px;width:81px"><span class="dt">Standard</span></div>
<div class="c" style="left:642px;top:549px;width:84px"><span class="dt">CHF</span></div>
<div class="c" style="left:728px;top:549px;width:93px"><span class="dt n">Mar - 2024</span></div>
<div class="c" style="left:823px;top:549px;width:66px"><span class="dt n">0</span></div>
<div class="c" style="left:891px;top:549px;width:66px"><span class="dt n">2</span></div>
<div class="c" style="left:959px;top:549px;width:192px"><span class="dt n">CHF - 1.072, 1.078, 1.084, 1.090</span></div>
<div class="c" style="left:1153px;top:549px;width:57px"><span class="dt">CHF</span></div>
<div class="c" style="left:1212px;top:549px;width:101px"><span class="dt n">2</span></div>
<div class="c" style="left:1315px;top:549px;width:86px"><span class="dt n">1.072</span></div>
<div class="rc" style="top:567px"><span class="rn">13</span></div>
<div class="c" style="left:65px;top:567px;width:86px"><span class="dt n">12</span></div>
<div class="c" style="left:153px;top:567px;width:112px"><span class="dt n">12,345</span></div>
<div class="c" style="left:267px;top:567px;width:89px"><span class="dt">Property B</span></div>
<div class="c" style="left:358px;top:567px;width:87px"><span class="dt">Company</span></div>
<div class="c" style="left:447px;top:567px;width:110px"><span class="dt">Service Charge</span></div>
<div class="c" style="left:559px;top:567px;width:81px"><span class="dt">Standard</span></div>
<div class="c" style="left:642px;top:567px;width:84px"><span class="dt">CHF</span></div>
<div class="c" style="left:728px;top:567px;width:93px"><span class="dt n">Jan - 2024</span></div>
<div class="c" style="left:823px;top:567px;width:66px"><span class="dt n">0</span></div>
<div class="c" style="left:891px;top:567px;width:66px"><span class="dt n">2</span></div>
<div class="c" style="left:959px;top:567px;width:192px"><span class="dt n">CHF - 1.072, 1.078, 1.084, 1.090</span></div>
<div class="c" style="left:1153px;top:567px;width:57px"><span class="dt">CHF</span></div>
<div class="c" style="left:1212px;top:567px;width:101px"><span class="dt n">2</span></div>
<div class="c" style="left:1315px;top:567px;width:86px"><span class="dt n">1.072</span></div>
<div class="rc" style="top:585px"><span class="rn">14</span></div>
<div class="c" style="left:65px;top:585px;width:86px"><span class="dt n">12</span></div>
<div class="c" style="left:153px;top:585px;width:112px"><span class="dt n">12,345</span></div>
<div class="c" style="left:267px;top:585px;width:89px"><span class="dt">Property B</span></div>
<div class="c" style="left:358px;top:585px;width:87px"><span class="dt">Company</span></div>
<div class="c" style="left:447px;top:585px;width:110px"><span class="dt">Service Charge</span></div>
<div class="c" style="left:559px;top:585px;width:81px"><span class="dt">Standard</span></div>
<div class="c" style="left:642px;top:585px;width:84px"><span class="dt">CHF</span></div>
<div class="c" style="left:728px;top:585px;width:93px"><span class="dt n">Feb - 2024</span></div>
<div class="c" style="left:823px;top:585px;width:66px"><span class="dt n">0</span></div>
<div class="c" style="left:891px;top:585px;width:66px"><span class="dt n">2</span></div>
<div class="c" style="left:959px;top:585px;width:192px"><span class="dt n">CHF - 1.072, 1.078, 1.084, 1.090</span></div>
<div class="c" style="left:1153px;top:585px;width:57px"><span class="dt">CHF</span></div>
<div class="c" style="left:1212px;top:585px;width:101px"><span class="dt n">2</span></div>
<div class="c" style="left:1315px;top:585px;width:86px"><span class="dt n">1.072</span></div>
<div class="rc" style="top:603px"><span class="rn">15</span></div>
<div class="c" style="left:65px;top:603px;width:86px"><span class="dt n">12</span></div>
<div class="c" style="left:153px;top:603px;width:112px"><span class="dt n">12,345</span></div>
<div class="c" style="left:267px;top:603px;width:89px"><span class="dt">Property B</span></div>
<div class="c" style="left:358px;top:603px;width:87px"><span class="dt">Company</span></div>
<div class="c" style="left:447px;top:603px;width:110px"><span class="dt">Service Charge</span></div>
<div class="c" style="left:559px;top:603px;width:81px"><span class="dt">Standard</span></div>
<div class="c" style="left:642px;top:603px;width:84px"><span class="dt">CHF</span></div>
<div class="c" style="left:728px;top:603px;width:93px"><span class="dt n">Mar - 2024</span></div>
<div class="c" style="left:823px;top:603px;width:66px"><span class="dt n">0</span></div>
<div class="c" style="left:891px;top:603px;width:66px"><span class="dt n">2</span></div>
<div class="c" style="left:959px;top:603px;width:192px"><span class="dt n">CHF - 1.072, 1.078, 1.084, 1.090</span></div>
<div class="c" style="left:1153px;top:603px;width:57px"><span class="dt">CHF</span></div>
<div class="c" style="left:1212px;top:603px;width:101px"><span class="dt n">2</span></div>
<div class="c" style="left:1315px;top:603px;width:86px"><span class="dt n">1.072</span></div>
<div class="rc" style="top:621px"><span class="rn">16</span></div>
<div class="c" style="left:65px;top:621px;width:86px"><span class="dt n">13</span></div>
<div class="c" style="left:153px;top:621px;width:112px"><span class="dt n">12,345</span></div>
<div class="c" style="left:267px;top:621px;width:89px"><span class="dt">Property B</span></div>
<div class="c" style="left:358px;top:621px;width:87px"><span class="dt">Company</span></div>
<div class="c" style="left:447px;top:621px;width:110px"><span class="dt">Service Charge</span></div>
<div class="c" style="left:559px;top:621px;width:81px"><span class="dt">Standard</span></div>
<div class="c" style="left:642px;top:621px;width:84px"><span class="dt">CHF</span></div>
<div class="c" style="left:728px;top:621px;width:93px"><span class="dt n">Jan - 2024</span></div>
<div class="c" style="left:823px;top:621px;width:66px"><span class="dt n">0</span></div>
<div class="c" style="left:891px;top:621px;width:66px"><span class="dt n">2</span></div>
<div class="c" style="left:959px;top:621px;width:192px"><span class="dt n">CHF - 1.072, 1.078, 1.084, 1.090</span></div>
<div class="c" style="left:1153px;top:621px;width:57px"><span class="dt">CHF</span></div>
<div class="c" style="left:1212px;top:621px;width:101px"><span class="dt n">2</span></div>
<div class="c" style="left:1315px;top:621px;width:86px"><span class="dt n">1.072</span></div>
<div class="rc" style="top:639px"><span class="rn">17</span></div>
<div class="c" style="left:65px;top:639px;width:86px"><span class="dt n">13</span></div>
<div class="c" style="left:153px;top:639px;width:112px"><span class="dt n">12,345</span></div>
<div class="c" style="left:267px;top:639px;width:89px"><span class="dt">Property B</span></div>
<div class="c" style="left:358px;top:639px;width:87px"><span class="dt">Company</span></div>
<div class="c" style="left:447px;top:639px;width:110px"><span class="dt">Service Charge</span></div>
<div class="c" style="left:559px;top:639px;width:81px"><span class="dt">Standard</span></div>
<div class="c" style="left:642px;top:639px;width:84px"><span class="dt">CHF</span></div>
<div class="c" style="left:728px;top:639px;width:93px"><span class="dt n">Feb - 2024</span></div>
<div class="c" style="left:823px;top:639px;width:66px"><span class="dt n">0</span></div>
<div class="c" style="left:891px;top:639px;width:66px"><span class="dt n">2</span></div>
<div class="c" style="left:959px;top:639px;width:192px"><span class="dt n">CHF - 1.072, 1.078, 1.084, 1.090</span></div>
<div class="c" style="left:1153px;top:639px;width:57px"><span class="dt">CHF</span></div>
<div class="c" style="left:1212px;top:639px;width:101px"><span class="dt n">2</span></div>
<div class="c" style="left:1315px;top:639px;width:86px"><span class="dt n">1.072</span></div>
</body></html>
